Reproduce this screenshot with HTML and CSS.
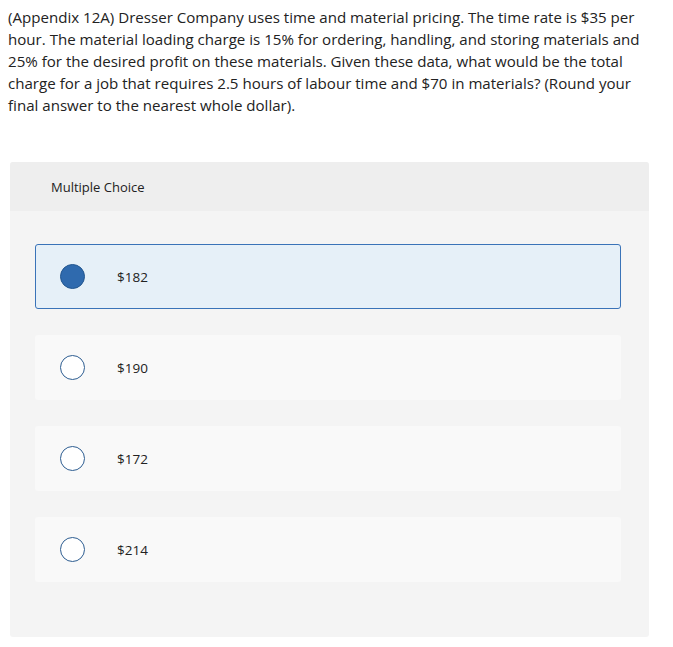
FILE: index.html
```html
<!DOCTYPE html>
<html>
<head>
<meta charset="utf-8">
<link rel="stylesheet" href="styles.css">
</head>
<body>
<p class="question">(Appendix 12A) Dresser Company uses time and material pricing. The time rate is $35 per hour. The material loading charge is 15% for ordering, handling, and storing materials and 25% for the desired profit on these materials. Given these data, what would be the total charge for a job that requires 2.5 hours of labour time and $70 in materials? (Round your final answer to the nearest whole dollar).</p>
<div class="panel">
  <div class="panel-head">Multiple Choice</div>
  <div class="options">
    <div class="option selected"><span class="radio"></span><span class="label">$182</span></div>
    <div class="option"><span class="radio"></span><span class="label">$190</span></div>
    <div class="option"><span class="radio"></span><span class="label">$172</span></div>
    <div class="option"><span class="radio"></span><span class="label">$214</span></div>
  </div>
</div>
</body>
</html>
```
FILE: styles.css
```css
html, body { margin: 0; padding: 0; background: #fff; }
body {
  font-family: "Open Sans", "Liberation Sans", sans-serif;
  color: #222;
  padding: 6px 8px 0 8px;
}
.question {
  margin: 0;
  font-size: 15.1px;
  line-height: 22px;
  width: 640px;
}
.panel {
  margin: 46px 16px 0 2px;
  width: 639px;
  background: #f4f4f4;
  border-radius: 3px;
  overflow: hidden;
}
.panel-head {
  background: #eeeeee;
  height: 49px;
  line-height: 50px;
  padding-left: 41px;
  font-size: 13px;
  color: #222;
}
.options {
  padding: 33px 28px 55px 25px;
  display: flex;
  flex-direction: column;
  gap: 26px;
}
.option {
  height: 65px;
  background: #f9f9f9;
  border-radius: 3px;
  display: flex;
  align-items: center;
  box-sizing: border-box;
  padding-left: 25px;
}
.option.selected {
  background: #e6f0f8;
  border: 1px solid #3a73b8;
  padding-left: 24px;
}
.radio {
  width: 25px;
  height: 25px;
  box-sizing: border-box;
  border: 1.5px solid #2d5d91;
  border-radius: 50%;
  background: #fff;
  flex: none;
}
.selected .radio {
  background: #2f6aae;
  border-color: #22568f;
}
.label {
  margin-left: 32px;
  font-size: 13.5px;
  color: #222;
}
```
